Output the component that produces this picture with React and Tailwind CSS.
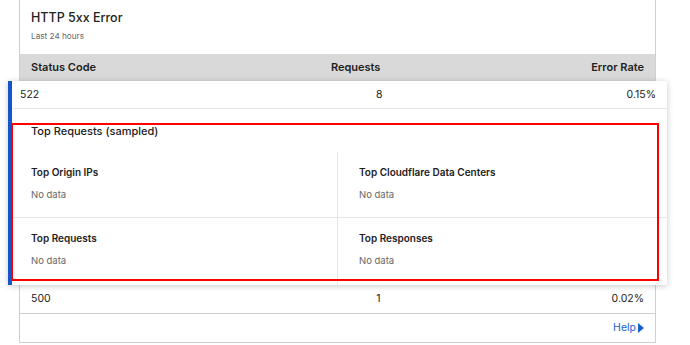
import React from 'react';

const font = { fontFamily: 'Inter, "Liberation Sans", sans-serif' };

const Cell = ({ title, className }) => (
  <div className={className}>
    <div className="pt-[14px] text-[10px] font-semibold leading-[13px] text-[#222]">{title}</div>
    <div className="mt-[9px] text-[9.5px] leading-[13px] text-[#666]">No data</div>
  </div>
);

const App = () => {
  return (
    <div className="relative h-[345px] w-[690px] overflow-hidden bg-white text-[#222]" style={font}>
      <div className="ml-[19px] w-[637px] border-x border-b border-[#cfcfcf] bg-white">
        {/* card head */}
        <div className="h-[54px] px-[11px] pt-[9px]">
          <div className="text-[12.5px] font-medium leading-[18px]">HTTP 5xx Error</div>
          <div className="mt-[1px] text-[8.2px] leading-[16px] text-[#666]">Last 24 hours</div>
        </div>

        {/* table header */}
        <div className="grid h-[27px] grid-cols-[47%_10%_1fr] items-center bg-[#d9d9d9] px-[11px] text-[11px] font-semibold">
          <div>Status Code</div>
          <div className="text-right">Requests</div>
          <div className="text-right">Error Rate</div>
        </div>

        {/* expanded row */}
        <div className="relative z-10 -mx-[12px] border-l-4 border-[#1456c8] bg-white shadow-[0_1px_6px_rgba(0,0,0,0.22)]">
          <div className="grid h-[28px] grid-cols-[47%_10%_1fr] items-center border-b border-[#e6e6e6] pl-[8px] pr-[11px] text-[10.5px]">
            <div>522</div>
            <div className="text-right">8</div>
            <div className="text-right">0.15%</div>
          </div>
          <div className="h-[43px] pl-[19px] pt-[14px] text-[11px] font-medium leading-[16px]">Top Requests (sampled)</div>
          <div className="grid grid-cols-[326px_1fr]">
            <Cell title="Top Origin IPs" className="h-[66px] border-r border-b border-[#e6e6e6] pl-[19px]" />
            <Cell title="Top Cloudflare Data Centers" className="h-[66px] border-b border-[#e6e6e6] pl-[21px]" />
            <Cell title="Top Requests" className="h-[67px] border-r border-[#e6e6e6] pl-[19px]" />
            <Cell title="Top Responses" className="h-[67px] pl-[21px]" />
          </div>
        </div>

        {/* next row */}
        <div className="grid h-[29px] grid-cols-[47%_10%_1fr] items-center border-b border-[#cfcfcf] px-[11px] text-[10.5px]">
          <div>500</div>
          <div className="text-right">1</div>
          <div className="text-right">0.02%</div>
        </div>

        {/* footer */}
        <div className="flex h-[28px] items-center justify-end px-[11px]">
          <a className="flex items-center gap-[2px] text-[10.5px] text-[#1a5fd0]">
            Help
            <svg width="6" height="10" viewBox="0 0 6 10" className="fill-current">
              <path d="M0 0 L6 5 L0 10 Z" />
            </svg>
          </a>
        </div>
      </div>

      {/* annotation box drawn over the screenshot */}
      <div className="pointer-events-none absolute left-[11px] top-[123px] z-20 h-[158px] w-[648px] border-2 border-[#ff0000]" />
    </div>
  );
};

export default App;
